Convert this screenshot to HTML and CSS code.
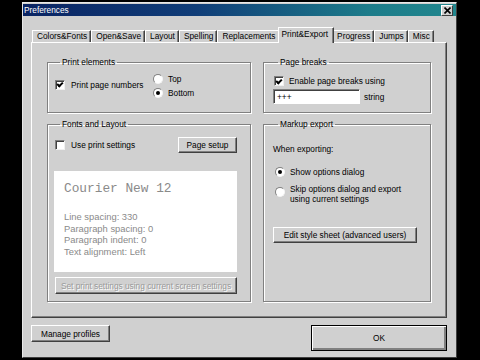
FILE: index.html
```html
<!DOCTYPE html>
<html lang="en">
<head>
    <meta charset="UTF-8">
    <title>Preferences</title>
    <link rel="stylesheet" href="styles.css">
</head>
<body>
    <div class="window">
        <div class="titlebar">
            <span class="title">Preferences</span>
            <span class="close-btn">
                <svg width="7" height="7" viewBox="0 0 7 7"><path d="M0.5 0.5 L6.5 6.5 M6.5 0.5 L0.5 6.5" stroke="#000" stroke-width="1.6"/></svg>
            </span>
        </div>

        <div class="content">
            <ul class="tabs">
                <li>Colors&amp;Fonts</li>
                <li>Open&amp;Save</li>
                <li>Layout</li>
                <li>Spelling</li>
                <li>Replacements</li>
                <li class="active">Print&amp;Export</li>
                <li>Progress</li>
                <li>Jumps</li>
                <li>Misc</li>
            </ul>

            <div class="panel">
                <!-- Print elements -->
                <fieldset class="group print-elements">
                    <legend>Print elements</legend>
                    <div class="print-row">
                        <label class="check-label"><span class="checkbox checked"></span>Print page numbers</label>
                        <div class="radio-col">
                            <label class="radio-label"><span class="radio"></span>Top</label>
                            <label class="radio-label"><span class="radio selected"></span>Bottom</label>
                        </div>
                    </div>
                </fieldset>

                <!-- Page breaks -->
                <fieldset class="group page-breaks">
                    <legend>Page breaks</legend>
                    <label class="check-label"><span class="checkbox checked"></span>Enable page breaks using</label>
                    <div class="string-row">
                        <span class="text-input">+++</span>
                        <span>string</span>
                    </div>
                </fieldset>

                <!-- Fonts and Layout -->
                <fieldset class="group fonts-layout">
                    <legend>Fonts and Layout</legend>
                    <div class="setup-row">
                        <label class="check-label"><span class="checkbox"></span>Use print settings</label>
                        <span class="btn page-setup">Page setup</span>
                    </div>
                    <div class="preview">
                        <div class="preview-font">Courier New 12</div>
                        <div class="preview-lines">
                            <div>Line spacing: 330</div>
                            <div>Paragraph spacing: 0</div>
                            <div>Paragraph indent: 0</div>
                            <div>Text alignment: Left</div>
                        </div>
                    </div>
                    <span class="btn disabled">Set print settings using current screen settings</span>
                </fieldset>

                <!-- Markup export -->
                <fieldset class="group markup-export">
                    <legend>Markup export</legend>
                    <div class="when">When exporting:</div>
                    <label class="radio-label opt-show"><span class="radio selected"></span>Show options dialog</label>
                    <label class="radio-label opt-skip"><span class="radio"></span><span>Skip options dialog and export<br>using current settings</span></label>
                    <span class="btn edit-style">Edit style sheet (advanced users)</span>
                </fieldset>
            </div>

            <div class="bottom-row">
                <span class="btn manage">Manage profiles</span>
                <span class="btn ok">OK</span>
            </div>
        </div>
    </div>
</body>
</html>
```

FILE: styles.css
```css
body {
    margin: 0;
    background-color: #000;
    font-family: "Liberation Sans", Arial, sans-serif;
    font-size: 8.3px;
    color: #000;
}
.window {
    box-sizing: border-box;
    width: 435px;
    height: 356px;
    margin: 2px 0 0 22px;
    background-color: #d0d0d0;
    border: 1px solid;
    border-color: #e8e8e8 #404040 #404040 #e8e8e8;
}
.titlebar {
    display: flex;
    align-items: center;
    justify-content: space-between;
    height: 12px;
    margin: 1px 0 0 0;
    padding: 0 3px 0 1px;
    background: linear-gradient(90deg, #0a2463 0%, #103d78 40%, #1d7c8a 80%, #22878e 100%);
    color: #fff;
}
.close-btn {
    display: flex;
    align-items: center;
    justify-content: center;
    box-sizing: border-box;
    width: 12px;
    height: 11px;
    background-color: #d0d0d0;
    border: 1px solid;
    border-color: #fff #404040 #404040 #fff;
}

.content {
    padding: 11px 9px 0 8px;
}

/* Tabs */
.tabs {
    display: flex;
    align-items: flex-end;
    height: 15px;
    margin: 0;
    padding: 0 0 0 1px;
    list-style-type: none;
}
.tabs li {
    box-sizing: border-box;
    height: 12px;
    padding: 0 3px 0 4px;
    line-height: 11px;
    border-top: 1px solid #fff;
    border-left: 1px solid #fff;
    border-right: 1px solid #404040;
    box-shadow: inset -1px 0 #808080;
}
.tabs li.active {
    position: relative;
    height: 16px;
    margin: 0 -2px -1px -2px;
    padding: 0 5px 0 3px;
    line-height: 12px;
    background-color: #d0d0d0;
    z-index: 1;
}

.panel {
    box-sizing: border-box;
    display: grid;
    grid-template-columns: 204px 168px;
    grid-template-rows: 56px 1fr;
    column-gap: 12px;
    row-gap: 6px;
    height: 276px;
    padding: 14px 15px 15px 15px;
    border: 1px solid;
    border-color: #fff #404040 #404040 #fff;
    box-shadow: inset -1px -1px #808080;
}

.group {
    margin: 0;
    min-width: 0;
    border: 1px solid #808080;
    box-shadow: inset 1px 1px #fff, 1px 1px #fff;
}
.group legend {
    margin-left: 5px;
    padding: 0 2px;
    line-height: 10px;
}

.check-label, .radio-label {
    display: flex;
    align-items: center;
}
.checkbox {
    box-sizing: border-box;
    display: flex;
    align-items: center;
    justify-content: center;
    width: 10px;
    height: 10px;
    margin-right: 6px;
    background-color: #fff;
    border: 1px solid;
    border-color: #808080 #f0f0f0 #f0f0f0 #808080;
    box-shadow: inset 1px 1px #404040;
}
.checkbox.checked::after {
    content: "";
    width: 4px;
    height: 2px;
    margin-top: -1px;
    border-left: 2px solid #000;
    border-bottom: 2px solid #000;
    transform: rotate(-45deg);
}
.radio {
    box-sizing: border-box;
    display: flex;
    align-items: center;
    justify-content: center;
    width: 10px;
    height: 10px;
    margin-right: 5px;
    border-radius: 50%;
    background-color: #fff;
    border: 1px solid;
    border-color: #808080 #f4f4f4 #f4f4f4 #808080;
}
.radio.selected::after {
    content: "";
    width: 4px;
    height: 4px;
    border-radius: 50%;
    background-color: #000;
}

.btn {
    box-sizing: border-box;
    display: flex;
    align-items: center;
    justify-content: center;
    background-color: #d0d0d0;
    border: 1px solid;
    border-color: #fff #404040 #404040 #fff;
    box-shadow: inset -1px -1px #808080;
    white-space: nowrap;
}
.btn.disabled {
    color: #9a9a9a;
    text-shadow: 1px 1px #fff;
}

/* Print elements */
.print-elements {
    padding: 5px 7px 0 7px;
}
.print-row {
    display: flex;
    align-items: center;
}
.print-row .check-label {
    width: 98px;
    margin-top: -3px;
}
.radio-col {
    display: flex;
    flex-direction: column;
}
.radio-col .radio-label {
    height: 14px;
}

/* Page breaks */
.page-breaks {
    padding: 8px 9px 0 9px;
}
.page-breaks .check-label {
    height: 12px;
    margin-left: 1px;
}
.page-breaks .checkbox {
    margin-right: 5px;
}
.string-row {
    display: flex;
    align-items: center;
    margin-top: 2px;
}
.text-input {
    box-sizing: border-box;
    width: 87px;
    height: 15px;
    margin-right: 4px;
    padding: 2px 0 0 3px;
    background-color: #fff;
    border: 1px solid;
    border-color: #808080 #fff #fff #808080;
    box-shadow: inset 1px 1px #404040;
}

/* Fonts and Layout */
.fonts-layout {
    padding: 8px 13px 0 7px;
}
.setup-row {
    display: flex;
    align-items: center;
    justify-content: space-between;
}
.page-setup {
    width: 59px;
    height: 16px;
}
.preview {
    height: 101px;
    margin: 18px 0 0 -1px;
    padding: 11px 0 0 10px;
    box-sizing: border-box;
    background-color: #fff;
    color: #8a8a8a;
}
.preview-font {
    font-family: "Liberation Mono", "Courier New", monospace;
    font-size: 12.8px;
    line-height: 14px;
}
.preview-lines {
    margin-top: 15px;
    font-size: 9.4px;
    line-height: 11.7px;
}
.fonts-layout .btn.disabled {
    height: 17px;
    margin-top: 5px;
}

/* Markup export */
.markup-export {
    padding: 14px 9px 0 9px;
}
.when {
    line-height: 12px;
}
.opt-show {
    height: 12px;
    margin: 11px 0 0 2px;
}
.opt-skip {
    margin: 6px 0 0 2px;
    line-height: 10px;
}
.opt-skip .radio {
    margin-top: -4px;
}
.edit-style {
    width: 144px;
    height: 16px;
    margin-top: 23px;
}

/* Bottom buttons */
.bottom-row {
    display: flex;
    align-items: flex-start;
    justify-content: space-between;
    margin-top: 7px;
}
.manage {
    width: 79px;
    height: 17px;
}
.ok {
    width: 136px;
    height: 26px;
    border-color: #000;
    box-shadow: inset 1px 1px #fff, inset -2px -2px #808080;
}
```
